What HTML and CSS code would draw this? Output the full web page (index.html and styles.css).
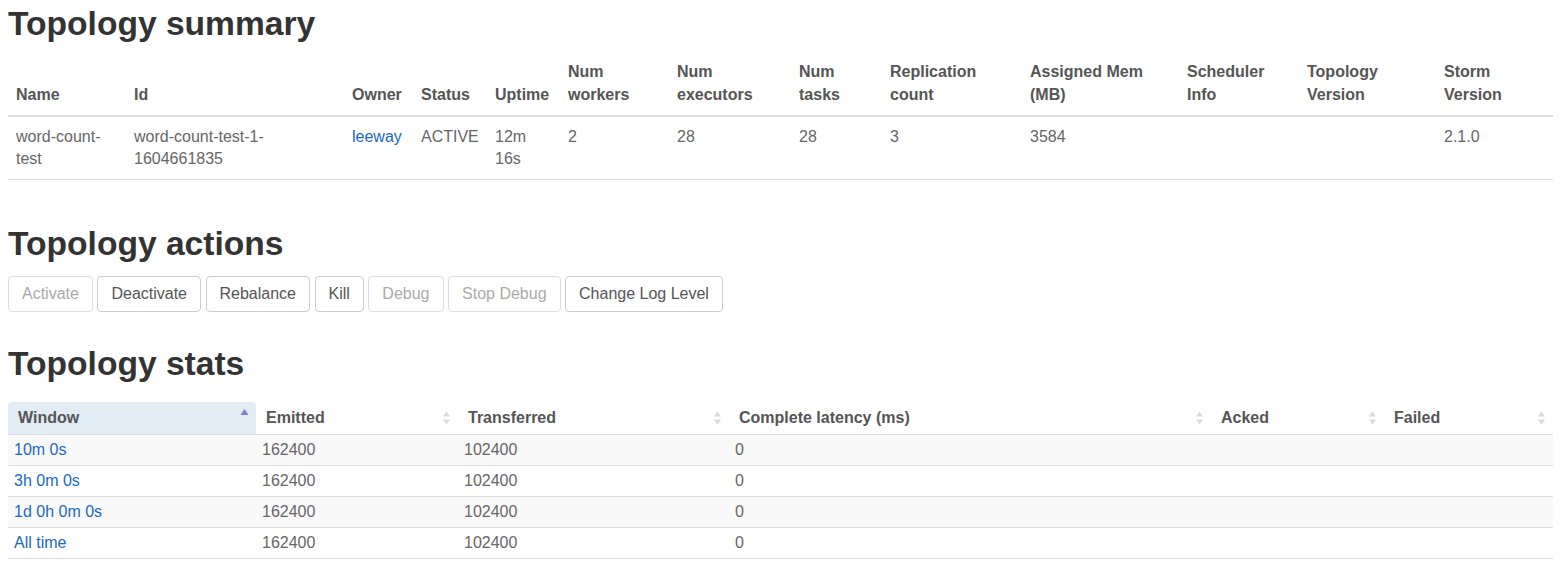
FILE: index.html
```html
<!DOCTYPE html>
<html>
<head>
<meta charset="utf-8">
<title>Topology</title>
<link rel="stylesheet" href="styles.css">
</head>
<body>
<section class="sec sec-summary">
  <h2 class="title">Topology summary</h2>
  <table class="summary">
    <colgroup>
      <col class="c1"><col class="c2"><col class="c3"><col class="c4"><col class="c5"><col class="c6"><col class="c7"><col class="c8"><col class="c9"><col class="c10"><col class="c11"><col class="c12"><col class="c13">
    </colgroup>
    <thead>
      <tr>
        <th>Name</th><th>Id</th><th>Owner</th><th>Status</th><th>Uptime</th><th>Num workers</th><th>Num executors</th><th>Num tasks</th><th>Replication count</th><th>Assigned Mem (MB)</th><th>Scheduler Info</th><th>Topology Version</th><th>Storm Version</th>
      </tr>
    </thead>
    <tbody>
      <tr>
        <td>word-count-test</td><td>word-count-test-1-1604661835</td><td><a href="#">leeway</a></td><td>ACTIVE</td><td>12m 16s</td><td>2</td><td>28</td><td>28</td><td>3</td><td>3584</td><td></td><td></td><td>2.1.0</td>
      </tr>
    </tbody>
  </table>
</section>

<section class="sec sec-actions">
  <h2 class="title">Topology actions</h2>
  <div class="actions">
    <button class="btn" disabled>Activate</button>
    <button class="btn">Deactivate</button>
    <button class="btn">Rebalance</button>
    <button class="btn">Kill</button>
    <button class="btn" disabled>Debug</button>
    <button class="btn" disabled>Stop Debug</button>
    <button class="btn">Change Log Level</button>
  </div>
</section>

<section class="sec sec-stats">
  <h2 class="title">Topology stats</h2>
  <table class="stats">
    <colgroup>
      <col class="s1"><col class="s2"><col class="s3"><col class="s4"><col class="s5"><col class="s6">
    </colgroup>
    <thead>
      <tr>
        <th class="sorted">Window<span class="sort"><svg width="9" height="14" viewBox="0 0 9 14"><path d="M4.5 1 L8.5 7 L0.5 7 Z" fill="#7b7fd6"/></svg></span></th>
        <th>Emitted<span class="sort"><svg width="9" height="14" viewBox="0 0 9 14"><path d="M4.5 0.5 L8 5.5 L1 5.5 Z M1 8.5 L8 8.5 L4.5 13.5 Z" fill="#d9d9d9"/></svg></span></th>
        <th>Transferred<span class="sort"><svg width="9" height="14" viewBox="0 0 9 14"><path d="M4.5 0.5 L8 5.5 L1 5.5 Z M1 8.5 L8 8.5 L4.5 13.5 Z" fill="#d9d9d9"/></svg></span></th>
        <th>Complete latency (ms)<span class="sort"><svg width="9" height="14" viewBox="0 0 9 14"><path d="M4.5 0.5 L8 5.5 L1 5.5 Z M1 8.5 L8 8.5 L4.5 13.5 Z" fill="#d9d9d9"/></svg></span></th>
        <th>Acked<span class="sort"><svg width="9" height="14" viewBox="0 0 9 14"><path d="M4.5 0.5 L8 5.5 L1 5.5 Z M1 8.5 L8 8.5 L4.5 13.5 Z" fill="#d9d9d9"/></svg></span></th>
        <th>Failed<span class="sort"><svg width="9" height="14" viewBox="0 0 9 14"><path d="M4.5 0.5 L8 5.5 L1 5.5 Z M1 8.5 L8 8.5 L4.5 13.5 Z" fill="#d9d9d9"/></svg></span></th>
      </tr>
    </thead>
    <tbody>
      <tr class="odd"><td><a href="#">10m 0s</a></td><td>162400</td><td>102400</td><td>0</td><td></td><td></td></tr>
      <tr><td><a href="#">3h 0m 0s</a></td><td>162400</td><td>102400</td><td>0</td><td></td><td></td></tr>
      <tr class="odd"><td><a href="#">1d 0h 0m 0s</a></td><td>162400</td><td>102400</td><td>0</td><td></td><td></td></tr>
      <tr><td><a href="#">All time</a></td><td>162400</td><td>102400</td><td>0</td><td></td><td></td></tr>
    </tbody>
  </table>
</section>
</body>
</html>
```

FILE: styles.css
```css
html, body {
  margin: 0;
  padding: 0;
  background: #fff;
}
body {
  font-family: "Liberation Sans", Arial, Helvetica, sans-serif;
  font-size: 16px;
  line-height: 1.428571;
  color: #666;
  padding: 0 11px 0 8px;
}
a {
  color: #1a68c7;
  text-decoration: none;
}
.title {
  font-size: 33.6px;
  font-weight: bold;
  line-height: 1.1;
  color: #333;
  margin: 0;
}
.sec-summary .title { margin-top: 6px; margin-bottom: 10px; }
.sec-actions { margin-top: 46px; }
.sec-actions .title { margin-bottom: 13px; }
.sec-stats { margin-top: 34px; }
.sec-stats .title { margin-bottom: 19px; }

table {
  border-collapse: collapse;
  border-spacing: 0;
  width: 100%;
  table-layout: fixed;
}

/* summary table */
.summary th {
  text-align: left;
  vertical-align: bottom;
  font-weight: bold;
  color: #555;
  padding: 8px;
  border-bottom: 2px solid #ddd;
}
.summary td {
  vertical-align: top;
  padding: 9px 8px 8px;
  border-bottom: 1px solid #ddd;
}
.summary .c1 { width: 118px; }
.summary .c2 { width: 218px; }
.summary .c3 { width: 69px; }
.summary .c4 { width: 74px; }
.summary .c5 { width: 73px; }
.summary .c6 { width: 109px; }
.summary .c7 { width: 122px; }
.summary .c8 { width: 91px; }
.summary .c9 { width: 140px; }
.summary .c10 { width: 157px; }
.summary .c11 { width: 120px; }
.summary .c12 { width: 137px; }
.summary .c13 { width: auto; }

/* actions */
.actions {
  display: flex;
  gap: 4.5px;
}
.btn {
  font-family: inherit;
  font-size: 16px;
  line-height: 22px;
  padding: 6px 13px;
  border: 1px solid #ccc;
  border-radius: 4px;
  background: #fff;
  color: #555;
  cursor: pointer;
}
.btn:disabled {
  color: #aaa;
  border-color: #ddd;
  cursor: not-allowed;
}

/* stats table */
.stats .s1 { width: 248px; }
.stats .s2 { width: 202px; }
.stats .s3 { width: 271px; }
.stats .s4 { width: 482px; }
.stats .s5 { width: 173px; }
.stats .s6 { width: auto; }
.stats th {
  position: relative;
  text-align: left;
  font-weight: bold;
  color: #555;
  line-height: 22px;
  padding: 5px 10px 5px 10px;
  border-bottom: 1px solid #ddd;
}
.stats th.sorted {
  background: #e1ecf4;
  border-top-left-radius: 4px;
  border-top-right-radius: 4px;
}
.stats .sort {
  position: absolute;
  right: 7px;
  top: 9px;
  width: 9px;
  height: 14px;
  display: block;
}
.stats .sort svg { display: block; }
.stats th.sorted .sort { top: 6px; }
.stats td {
  line-height: 22px;
  padding: 4px 6px;
  border-bottom: 1px solid #ddd;
}
.stats tr.odd td {
  background: #f9f9f9;
}
```
